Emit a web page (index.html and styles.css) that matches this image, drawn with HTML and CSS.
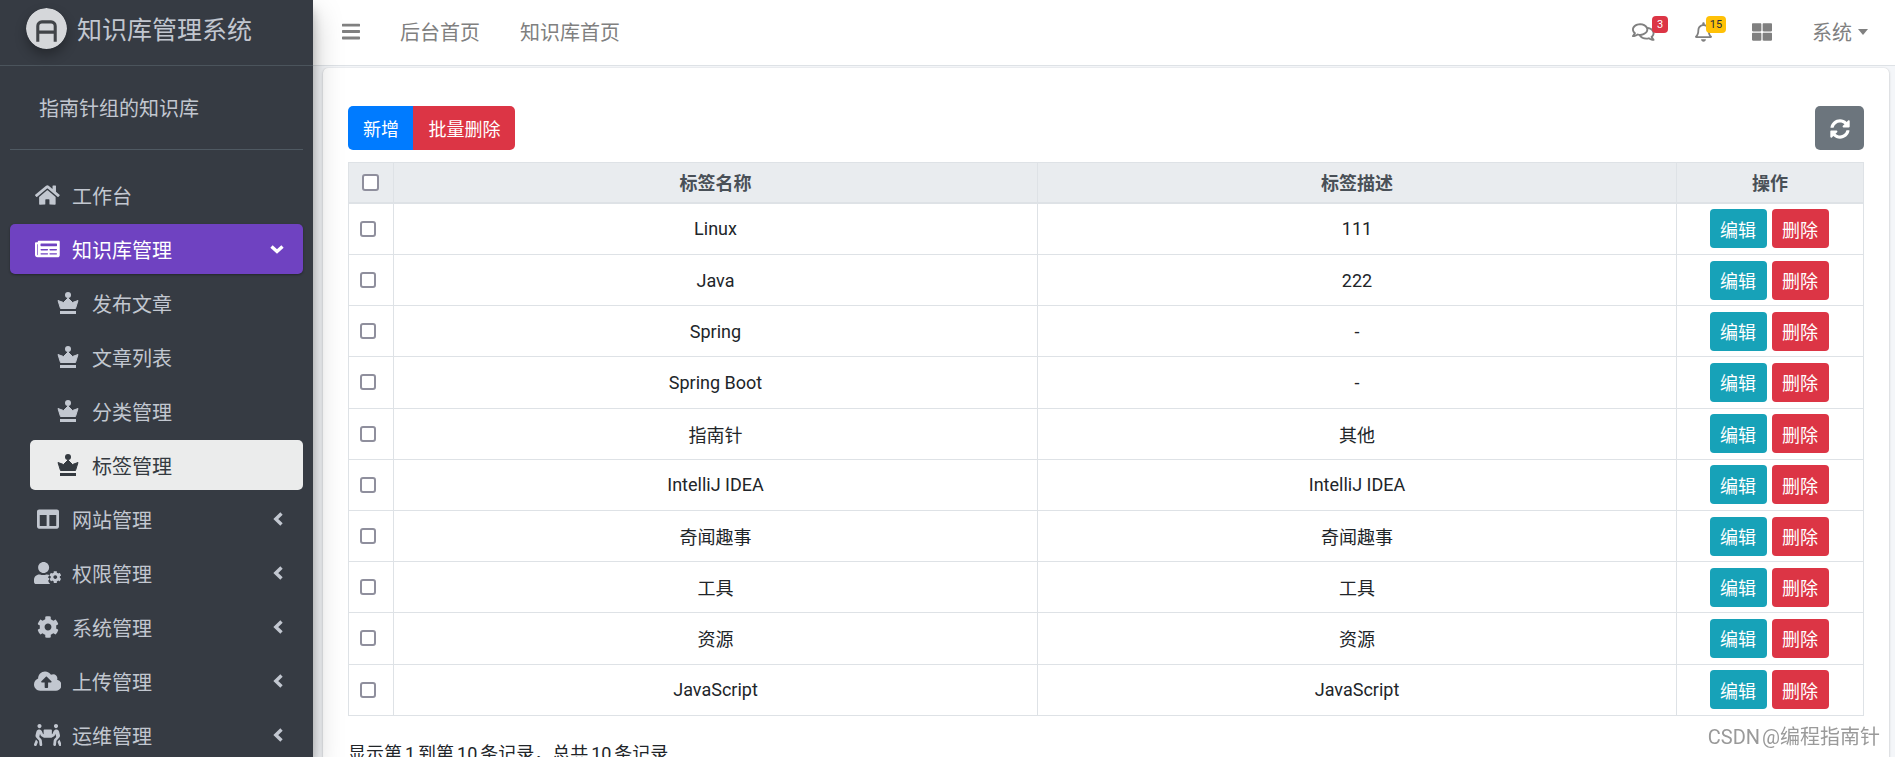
FILE: index.html
```html
<!doctype html>
<html lang="zh">
<head>
    <meta charset="UTF-8">
    <title>知识库管理系统</title>
    <link rel="stylesheet" href="styles.css">
</head>
<body>
    <svg class="icon-defs" xmlns="http://www.w3.org/2000/svg">
        <symbol id="i-crown" viewBox="0 0 22 22">
            <circle cx="11" cy="3" r="3"/>
            <path d="M3.500 16.500L1 8.500l5.500 2L11 6l4.500 4.500 5.500-2-2.500 8z" stroke="currentColor" stroke-linejoin="round"/>
            <rect x="3" y="19" width="16" height="3"/>
        </symbol>
        <symbol id="i-left" viewBox="0 0 10 14"><path d="M8.500 1.500L2.800 7l5.700 5.500" fill="none" stroke="currentColor" stroke-width="3.400"/></symbol>
        <symbol id="i-cog" viewBox="0 0 512 512"><path d="M487.4 315.7l-42.6-24.6c4.3-23.2 4.3-47 0-70.2l42.6-24.6c4.9-2.8 7.1-8.6 5.5-14-11.1-35.6-30-67.8-54.7-94.6-3.8-4.1-10-5.1-14.8-2.3L380.8 110c-17.9-15.4-38.5-27.3-60.8-35.1V25.8c0-5.6-3.9-10.5-9.4-11.7-36.7-8.2-74.3-7.8-109.2 0-5.5 1.2-9.4 6.1-9.4 11.7V75c-22.2 7.9-42.8 19.8-60.8 35.1L88.7 85.5c-4.9-2.8-11-1.9-14.8 2.3-24.7 26.7-43.6 58.9-54.7 94.6-1.7 5.4.6 11.2 5.5 14L67.3 221c-4.3 23.2-4.3 47 0 70.2l-42.6 24.6c-4.9 2.8-7.1 8.6-5.5 14 11.1 35.6 30 67.8 54.7 94.6 3.8 4.1 10 5.1 14.8 2.3l42.6-24.6c17.9 15.4 38.5 27.3 60.8 35.1v49.2c0 5.6 3.9 10.5 9.4 11.7 36.7 8.2 74.3 7.8 109.2 0 5.5-1.2 9.4-6.1 9.4-11.7v-49.2c22.2-7.9 42.8-19.8 60.8-35.1l42.6 24.6c4.9 2.8 11 1.9 14.8-2.3 24.7-26.7 43.6-58.9 54.7-94.6 1.5-5.5-.7-11.3-5.6-14.1zM256 336c-44.1 0-80-35.9-80-80s35.9-80 80-80 80 35.9 80 80-35.9 80-80 80z"/></symbol>
    </svg>

    <aside class="sidebar">
        <div class="brand">
            <svg class="brand-logo" viewBox="0 0 40 40">
                <circle cx="20" cy="20" r="20" fill="#d5d7da"/>
                <path d="M11.500 33V17.500a4 4 0 0 1 4-4h9a4 4 0 0 1 4 4V33M11.500 23.500h17" fill="none" stroke="#414448" stroke-width="3"/>
            </svg>
            <span class="brand-text">知识库管理系统</span>
        </div>
        <div class="user-panel">指南针组的知识库</div>
        <ul class="menu">
            <li class="menu-item">
                <span class="menu-icon"><svg viewBox="0 0 576 512"><path d="M280.37 148.26L96 300.11V464a16 16 0 0 0 16 16l112.06-.29a16 16 0 0 0 15.92-16V368a16 16 0 0 1 16-16h64a16 16 0 0 1 16 16v95.64a16 16 0 0 0 16 16.05L464 480a16 16 0 0 0 16-16V300L295.67 148.26a12.19 12.19 0 0 0-15.3 0zM571.6 251.47L488 182.56V44.05a12 12 0 0 0-12-12h-56a12 12 0 0 0-12 12v72.61L318.47 43a48 48 0 0 0-61 0L4.34 251.47a12 12 0 0 0-1.6 16.9l25.5 31A12 12 0 0 0 45.15 301l235.22-193.74a12.19 12.19 0 0 1 15.3 0L530.9 301a12 12 0 0 0 16.9-1.6l25.5-31a12 12 0 0 0-1.7-16.93z"/></svg></span>
                <span class="menu-label">工作台</span>
            </li>
            <li class="menu-item active">
                <span class="menu-icon"><svg viewBox="0 0 576 512"><path d="M552 64H88c-13.255 0-24 10.745-24 24v8H24c-13.255 0-24 10.745-24 24v272c0 30.928 25.072 56 56 56h472c26.51 0 48-21.49 48-48V88c0-13.255-10.745-24-24-24zM56 400a8 8 0 0 1-8-8V144h16v248a8 8 0 0 1-8 8zm236-16H140c-6.627 0-12-5.373-12-12v-8c0-6.627 5.373-12 12-12h152c6.627 0 12 5.373 12 12v8c0 6.627-5.373 12-12 12zm208 0H348c-6.627 0-12-5.373-12-12v-8c0-6.627 5.373-12 12-12h152c6.627 0 12 5.373 12 12v8c0 6.627-5.373 12-12 12zm-208-96H140c-6.627 0-12-5.373-12-12v-8c0-6.627 5.373-12 12-12h152c6.627 0 12 5.373 12 12v8c0 6.627-5.373 12-12 12zm208 0H348c-6.627 0-12-5.373-12-12v-8c0-6.627 5.373-12 12-12h152c6.627 0 12 5.373 12 12v8c0 6.627-5.373 12-12 12zm0-96H140c-6.627 0-12-5.373-12-12v-40c0-6.627 5.373-12 12-12h360c6.627 0 12 5.373 12 12v40c0 6.627-5.373 12-12 12z"/></svg></span>
                <span class="menu-label">知识库管理</span>
                <svg class="menu-arrow-down" viewBox="0 0 14 9"><path d="M1.500 1.500l5.500 5 5.500-5" fill="none" stroke="currentColor" stroke-width="3.400"/></svg>
            </li>
            <li class="menu-item sub">
                <span class="menu-icon"><svg class="crown"><use href="#i-crown"/></svg></span>
                <span class="menu-label">发布文章</span>
            </li>
            <li class="menu-item sub">
                <span class="menu-icon"><svg class="crown"><use href="#i-crown"/></svg></span>
                <span class="menu-label">文章列表</span>
            </li>
            <li class="menu-item sub">
                <span class="menu-icon"><svg class="crown"><use href="#i-crown"/></svg></span>
                <span class="menu-label">分类管理</span>
            </li>
            <li class="menu-item sub current">
                <span class="menu-icon"><svg class="crown"><use href="#i-crown"/></svg></span>
                <span class="menu-label">标签管理</span>
            </li>
            <li class="menu-item">
                <span class="menu-icon"><svg viewBox="0 0 512 512"><path d="M464 32H48C21.49 32 0 53.49 0 80v352c0 26.51 21.49 48 48 48h416c26.51 0 48-21.49 48-48V80c0-26.51-21.49-48-48-48zM224 416H64V160h160v256zm224 0H288V160h160v256z"/></svg></span>
                <span class="menu-label">网站管理</span>
                <svg class="menu-arrow"><use href="#i-left"/></svg>
            </li>
            <li class="menu-item">
                <span class="menu-icon"><svg viewBox="0 0 640 512"><path d="M224 256c70.700 0 128-57.300 128-128S294.700 0 224 0 96 57.300 96 128s57.300 128 128 128zM404 512H48c-26.500 0-48-21.500-48-48v-52c0-68.500 55.500-124 124-124h16.700c22.300 10.200 46.900 16 73.300 16s51-5.800 73.300-16H304c20 0 39 4.800 55.800 13.200-16 20-26.800 42-32.800 63.800l26 15c-2 12-2 24 0 36l-26 15c8 28 22 52 44 75 6 6 14 8 22 5l11 1z"/><path transform="translate(352 208) scale(.56)" d="M487.4 315.7l-42.600-24.600c4.300-23.200 4.300-47 0-70.200l42.600-24.600c4.900-2.800 7.100-8.600 5.500-14-11.100-35.600-30-67.800-54.700-94.600-3.800-4.100-10-5.100-14.800-2.300L380.800 110c-17.900-15.400-38.500-27.300-60.800-35.100V25.800c0-5.600-3.900-10.500-9.400-11.700-36.700-8.200-74.300-7.800-109.200 0-5.500 1.200-9.400 6.100-9.400 11.700V75c-22.200 7.900-42.800 19.800-60.800 35.100L88.700 85.500c-4.900-2.800-11-1.900-14.800 2.300-24.700 26.700-43.600 58.900-54.700 94.600-1.700 5.400.6 11.200 5.500 14L67.300 221c-4.300 23.200-4.300 47 0 70.200l-42.600 24.600c-4.900 2.800-7.100 8.600-5.500 14 11.100 35.600 30 67.800 54.700 94.600 3.800 4.100 10 5.100 14.800 2.300l42.600-24.600c17.900 15.400 38.500 27.300 60.800 35.100v49.200c0 5.600 3.900 10.500 9.400 11.700 36.700 8.200 74.300 7.800 109.200 0 5.500-1.200 9.400-6.100 9.400-11.700v-49.200c22.200-7.900 42.800-19.800 60.800-35.100l42.600 24.600c4.900 2.800 11 1.900 14.800-2.300 24.700-26.700 43.600-58.900 54.700-94.600 1.500-5.500-.7-11.300-5.600-14.100zM256 336c-44.100 0-80-35.900-80-80s35.900-80 80-80 80 35.900 80 80-35.900 80-80 80z"/></svg></span>
                <span class="menu-label">权限管理</span>
                <svg class="menu-arrow"><use href="#i-left"/></svg>
            </li>
            <li class="menu-item">
                <span class="menu-icon"><svg viewBox="0 0 512 512"><use href="#i-cog"/></svg></span>
                <span class="menu-label">系统管理</span>
                <svg class="menu-arrow"><use href="#i-left"/></svg>
            </li>
            <li class="menu-item">
                <span class="menu-icon"><svg viewBox="0 0 640 512"><path d="M537.6 226.6c4.100-10.700 6.400-22.400 6.400-34.600 0-53-43-96-96-96-19.700 0-38.100 6-53.300 16.200C367 64.200 315.300 32 256 32c-88.400 0-160 71.600-160 160 0 2.700.1 5.400.2 8.100C40.200 219.800 0 273.200 0 336c0 79.500 64.500 144 144 144h368c70.700 0 128-57.300 128-128 0-61.900-44-113.600-102.400-125.400zM393.400 288H328v112c0 8.800-7.200 16-16 16h-48c-8.800 0-16-7.200-16-16V288h-65.400c-14.300 0-21.400-17.200-11.300-27.300l105.400-105.400c6.200-6.200 16.400-6.200 22.600 0l105.400 105.400c10.100 10.100 2.900 27.300-11.300 27.300z"/></svg></span>
                <span class="menu-label">上传管理</span>
                <svg class="menu-arrow"><use href="#i-left"/></svg>
            </li>
            <li class="menu-item">
                <span class="menu-icon"><svg viewBox="0 0 640 512"><path d="M128 96c26.500 0 48-21.500 48-48S154.500 0 128 0 80 21.500 80 48s21.500 48 48 48zm384 0c26.500 0 48-21.500 48-48S538.500 0 512 0s-48 21.500-48 48 21.500 48 48 48zm125.700 372.100l-44-110-41.100 46.400-2 18.200 27.700 69.200c5 12.500 17 20.100 29.700 20.100 4 0 8-.7 11.900-2.300 16.400-6.600 24.400-25.200 17.800-41.600zm-34.200-209.800L585 178.100c-4.600-20-18.600-36.800-37.500-44.900-18.500-8-39-6.700-56.100 3.300-22.700 13.400-39.700 34.500-48.100 59.400L432 229.800 416 240v-96c0-8.800-7.200-16-16-16H240c-8.800 0-16 7.200-16 16v96l-16.100-10.200-11.300-33.900c-8.300-25-25.400-46-48.100-59.400-17.200-10-37.600-11.300-56.100-3.300-18.900 8.100-32.900 24.900-37.500 44.900l-18.400 80.200c-4.600 20 .7 41.200 14.400 56.700l67.200 75.900 10.100 92.600C130 499.800 143.800 512 160 512c1.200 0 2.300-.1 3.500-.2 17.600-1.900 30.200-17.700 28.300-35.300l-10.100-92.800c-1.500-13-6.900-25.100-15.600-35l-43.300-49 17.600-70.300 6.800 20.400c4.100 12.500 11.900 23.400 24.500 32.600l51.100 32.500c4.600 2.900 12.100 4.600 17.200 5h160c5.100-.4 12.600-2.100 17.200-5l51.100-32.500c12.600-9.200 20.400-20 24.500-32.600l6.800-20.400 17.600 70.300-43.300 49c-8.700 9.900-14.100 22-15.600 35l-10.100 92.800c-1.900 17.600 10.800 33.400 28.300 35.300 1.200.1 2.300.2 3.500.2 16.100 0 29.900-12.200 31.700-28.500l10.100-92.600 67.200-75.900c13.600-15.500 19-36.700 14.400-56.700zM46.300 358.100l-44 110c-6.600 16.400 1.400 35 17.800 41.600 16.800 6.600 35.100-1.700 41.600-17.800l27.700-69.200-2-18.200-41.100-46.400z"/></svg></span>
                <span class="menu-label">运维管理</span>
                <svg class="menu-arrow"><use href="#i-left"/></svg>
            </li>
        </ul>
    </aside>

    <div class="main">
        <nav class="topbar">
            <svg class="bars" viewBox="0 0 448 512"><path d="M16 132h416c8.837 0 16-7.163 16-16V76c0-8.837-7.163-16-16-16H16C7.163 60 0 67.163 0 76v40c0 8.837 7.163 16 16 16zm0 160h416c8.837 0 16-7.163 16-16v-40c0-8.837-7.163-16-16-16H16c-8.837 0-16 7.163-16 16v40c0 8.837 7.163 16 16 16zm0 160h416c8.837 0 16-7.163 16-16v-40c0-8.837-7.163-16-16-16H16c-8.837 0-16 7.163-16 16v40c0 8.837 7.163 16 16 16z"/></svg>
            <a class="top-link">后台首页</a>
            <a class="top-link">知识库首页</a>
            <div class="top-right">
                <span class="top-icon comments">
                    <svg viewBox="0 0 576 512"><path d="M532 386.200c27.500-27.100 44-61.100 44-98.200 0-80-76.500-146.100-176.200-157.900C368.300 72.500 294.300 32 208 32 93.100 32 0 103.600 0 192c0 37 16.500 71 44 98.200-15.300 30.700-37.300 54.500-37.700 54.900-6.300 6.700-8.100 16.500-4.400 25 3.600 8.500 12 14 21.200 14 53.500 0 96.700-20.200 125.200-38.800 9.200 2.100 18.700 3.700 28.400 4.900C208.100 407.600 281.800 448 368 448c20.800 0 40.800-2.400 59.800-6.800C456.300 459.700 499.400 480 553 480c9.200 0 17.500-5.500 21.200-14 3.600-8.500 1.900-18.300-4.400-25-.4-.3-22.500-24.100-37.800-54.800zm-392.800-92.300L122.100 305c-14.100 9.100-28.500 16.300-43.100 21.400 2.700-4.700 5.400-9.700 8-14.800l15.500-31.100L77.700 256C64.200 242.600 48 220.700 48 192c0-60.700 73.300-112 160-112s160 51.300 160 112-73.300 112-160 112c-16.500 0-33-1.900-49-5.600l-19.800-4.500zM498.300 352l-24.700 24.400 15.500 31.100c2.600 5.100 5.300 10.100 8 14.800-14.600-5.100-29-12.300-43.100-21.400l-17.100-11.100-19.900 4.600c-16 3.700-32.500 5.600-49 5.600-54 0-102.200-20.100-131.300-49.700C338 339.500 416 272.900 416 192c0-3.400-.4-6.700-.7-10C479.700 196.500 528 238.800 528 288c0 28.700-16.200 50.600-29.700 64z"/></svg>
                    <span class="badge badge-red">3</span>
                </span>
                <span class="top-icon bell">
                    <svg viewBox="0 0 448 512"><path d="M439.390 362.290c-19.320-20.760-55.470-51.990-55.470-154.290 0-77.700-54.480-139.900-127.940-155.160V32c0-17.670-14.320-32-31.980-32s-31.980 14.330-31.980 32v20.840C118.560 68.100 64.080 130.300 64.080 208c0 102.300-36.150 133.530-55.470 154.290-6 6.450-8.660 14.160-8.610 21.710.11 16.400 12.980 32 32.100 32h383.800c19.120 0 32-15.600 32.100-32 .05-7.550-2.610-15.270-8.610-21.710zM67.530 368c21.220-27.970 44.420-74.330 44.530-159.420 0-.2-.06-.38-.06-.58 0-61.860 50.140-112 112-112s112 50.140 112 112c0 .2-.06.38-.06.58.11 85.100 23.310 131.460 44.530 159.420H67.530zM224 512c35.320 0 63.970-28.650 63.970-64H160.030c0 35.350 28.650 64 63.970 64z"/></svg>
                    <span class="badge badge-yellow">15</span>
                </span>
                <svg class="top-grid" viewBox="0 0 512 512"><path d="M296 32h192c13.255 0 24 10.745 24 24v160c0 13.255-10.745 24-24 24H296c-13.255 0-24-10.745-24-24V56c0-13.255 10.745-24 24-24zm-80 0H24C10.745 32 0 42.745 0 56v160c0 13.255 10.745 24 24 24h192c13.255 0 24-10.745 24-24V56c0-13.255-10.745-24-24-24zM0 296v160c0 13.255 10.745 24 24 24h192c13.255 0 24-10.745 24-24V296c0-13.255-10.745-24-24-24H24c-13.255 0-24 10.745-24 24zm296 184h192c13.255 0 24-10.745 24-24V296c0-13.255-10.745-24-24-24H296c-13.255 0-24 10.745-24 24v160c0 13.255 10.745 24 24 24z"/></svg>
                <a class="top-link top-user">系统<span class="caret"></span></a>
            </div>
        </nav>

        <main class="content">
            <section class="card">
                <div class="toolbar">
                    <div class="btn-group">
                        <button class="btn btn-blue">新增</button>
                        <button class="btn btn-red">批量删除</button>
                    </div>
                    <button class="btn btn-gray">
                        <svg viewBox="0 0 512 512"><path d="M370.720 133.280C339.458 104.008 298.888 87.962 255.848 88c-77.458.068-144.328 53.178-162.791 126.850-1.344 5.363-6.122 9.150-11.651 9.150H24.103c-7.498 0-13.194-6.807-11.807-14.176C33.933 94.924 134.813 8 256 8c66.448 0 126.791 26.136 171.315 68.685L463.030 40.970C478.149 25.851 504 36.559 504 57.941V192c0 13.255-10.745 24-24 24H345.941c-21.382 0-32.090-25.851-16.971-40.971l41.750-41.749zM32 296h134.059c21.382 0 32.090 25.851 16.971 40.971l-41.750 41.750c31.262 29.273 71.835 45.319 114.876 45.280 77.418-.07 144.315-53.144 162.787-126.849 1.344-5.363 6.122-9.150 11.651-9.150h57.304c7.498 0 13.194 6.807 11.807 14.176C478.067 417.076 377.187 504 256 504c-66.448 0-126.791-26.136-171.315-68.685L48.970 471.030C33.851 486.149 8 475.441 8 454.059V320c0-13.255 10.745-24 24-24z"/></svg>
                    </button>
                </div>

                <table class="tag-table">
                    <colgroup>
                        <col class="col-check">
                        <col class="col-name">
                        <col class="col-desc">
                        <col>
                    </colgroup>
                    <thead>
                        <tr>
                            <th><input type="checkbox" class="check"></th>
                            <th>标签名称</th>
                            <th>标签描述</th>
                            <th>操作</th>
                        </tr>
                    </thead>
                    <tbody>
                        <tr><td><input type="checkbox" class="check check-row"></td><td>Linux</td><td>111</td><td><button class="btn btn-small btn-teal">编辑</button><button class="btn btn-small btn-red">删除</button></td></tr>
                        <tr><td><input type="checkbox" class="check check-row"></td><td>Java</td><td>222</td><td><button class="btn btn-small btn-teal">编辑</button><button class="btn btn-small btn-red">删除</button></td></tr>
                        <tr><td><input type="checkbox" class="check check-row"></td><td>Spring</td><td>-</td><td><button class="btn btn-small btn-teal">编辑</button><button class="btn btn-small btn-red">删除</button></td></tr>
                        <tr><td><input type="checkbox" class="check check-row"></td><td>Spring Boot</td><td>-</td><td><button class="btn btn-small btn-teal">编辑</button><button class="btn btn-small btn-red">删除</button></td></tr>
                        <tr><td><input type="checkbox" class="check check-row"></td><td>指南针</td><td>其他</td><td><button class="btn btn-small btn-teal">编辑</button><button class="btn btn-small btn-red">删除</button></td></tr>
                        <tr><td><input type="checkbox" class="check check-row"></td><td>IntelliJ IDEA</td><td>IntelliJ IDEA</td><td><button class="btn btn-small btn-teal">编辑</button><button class="btn btn-small btn-red">删除</button></td></tr>
                        <tr><td><input type="checkbox" class="check check-row"></td><td>奇闻趣事</td><td>奇闻趣事</td><td><button class="btn btn-small btn-teal">编辑</button><button class="btn btn-small btn-red">删除</button></td></tr>
                        <tr><td><input type="checkbox" class="check check-row"></td><td>工具</td><td>工具</td><td><button class="btn btn-small btn-teal">编辑</button><button class="btn btn-small btn-red">删除</button></td></tr>
                        <tr><td><input type="checkbox" class="check check-row"></td><td>资源</td><td>资源</td><td><button class="btn btn-small btn-teal">编辑</button><button class="btn btn-small btn-red">删除</button></td></tr>
                        <tr><td><input type="checkbox" class="check check-row"></td><td>JavaScript</td><td>JavaScript</td><td><button class="btn btn-small btn-teal">编辑</button><button class="btn btn-small btn-red">删除</button></td></tr>
                    </tbody>
                </table>

                <p class="table-info">显示第 1 到第 10 条记录，总共 10 条记录</p>
            </section>
        </main>
    </div>

    <div class="watermark">CSDN @编程指南针</div>
</body>
</html>
```

FILE: styles.css
```css
* {
    box-sizing: border-box;
}

html, body {
    height: 100%;
}

body {
    display: flex;
    margin: 0;
    overflow: hidden;
    background-color: #f4f6f9;
    color: #212529;
    font-family: Roboto, "Noto Sans CJK SC", sans-serif;
    font-size: 18px;
}

ul {
    list-style: none;
    margin: 0;
    padding: 0;
}

.icon-defs {
    position: absolute;
    width: 0;
    height: 0;
}

/* Sidebar */
.sidebar {
    position: relative;
    z-index: 2;
    flex: 0 0 313px;
    background-color: #363b43;
    color: #c2c7d0;
    font-size: 20px;
    box-shadow: 0 14px 28px rgba(0, 0, 0, .25), 0 10px 10px rgba(0, 0, 0, .22);
}

.brand {
    display: flex;
    align-items: center;
    height: 66px;
    padding: 0 0 17px 26px;
    border-bottom: 1px solid #4b545c;
}

.brand-logo {
    width: 41px;
    height: 41px;
    margin-top: 8px;
    border-radius: 50%;
    box-shadow: 0 6px 12px rgba(0, 0, 0, .3);
}

.brand-text {
    margin: 12px 0 0 10px;
    font-size: 25px;
    line-height: 1;
}

.user-panel {
    height: 84px;
    margin: 0 10px 20px;
    padding: 28px 0 0 29px;
    border-bottom: 1px solid #4f5962;
    line-height: 30px;
}

.menu {
    padding: 0 10px;
}

.menu-item {
    display: flex;
    align-items: center;
    height: 50px;
    margin-bottom: 4px;
    padding-left: 20px;
    border-radius: 5px;
}

.menu-item.sub {
    margin-left: 20px;
}

.menu-icon {
    display: flex;
    justify-content: center;
    flex: 0 0 35px;
    margin-right: 7px;
}

.menu-icon svg {
    height: 22px;
    fill: currentColor;
}

.menu-icon .crown {
    width: 22px;
}

.menu-label {
    flex: 1;
}

.menu-arrow {
    width: 10px;
    height: 14px;
    margin-right: 20px;
}

.menu-arrow-down {
    width: 14px;
    height: 9px;
    margin-right: 19px;
}

.menu-item.active {
    background-color: #6f42c1;
    color: #fff;
    box-shadow: 0 1px 3px rgba(0, 0, 0, .12), 0 1px 2px rgba(0, 0, 0, .24);
}

.menu-item.current {
    background-color: #ebecec;
    color: #343a40;
}

/* Top bar */
.main {
    flex: 1;
    min-width: 0;
}

.topbar {
    display: flex;
    align-items: center;
    height: 66px;
    padding: 0 0 2px 29px;
    background-color: #fff;
    border-bottom: 1px solid #dee2e6;
    font-size: 20px;
}

.bars {
    width: 18px;
    height: 21px;
    margin-right: 40px;
    fill: #808080;
}

.top-link {
    margin-right: 40px;
    color: #808080;
}

.top-right {
    display: flex;
    align-items: center;
    margin-left: auto;
}

.top-icon {
    position: relative;
    display: flex;
}

.top-icon svg {
    height: 20px;
    fill: #808080;
}

.comments {
    width: 23px;
    margin-right: 40px;
}

.bell {
    width: 17px;
    margin-right: 40px;
}

.badge {
    position: absolute;
    top: -6px;
    height: 17px;
    border-radius: 4px;
    font-size: 11px;
    line-height: 17px;
    text-align: center;
}

.badge-red {
    left: 20px;
    width: 16px;
    background-color: #dc3545;
    color: #fff;
}

.badge-yellow {
    left: 11px;
    width: 20px;
    background-color: #ffc107;
    color: #1f2d3d;
}

.top-grid {
    width: 20px;
    height: 20px;
    margin-right: 40px;
    fill: #808080;
}

.top-user {
    display: flex;
    align-items: center;
    margin-right: 27px;
}

.caret {
    width: 0;
    height: 0;
    margin-left: 6px;
    border-top: 6px solid #808080;
    border-left: 5.5px solid transparent;
    border-right: 5.5px solid transparent;
}

/* Content */
.content {
    padding: 2px 6px 0 10px;
}

.card {
    padding: 38px 25px 0 25px;
    background-color: #fff;
    border-radius: 5px;
    box-shadow: 0 0 1px rgba(0, 0, 0, .125), 0 1px 3px rgba(0, 0, 0, .2);
}

.toolbar {
    display: flex;
    justify-content: space-between;
    margin-bottom: 12px;
}

.btn-group {
    display: flex;
}

.btn {
    height: 44px;
    padding: 0 15px;
    border: none;
    color: #fff;
    font-family: inherit;
    font-size: 18px;
}

.btn-group .btn:first-child {
    padding: 0 14px 0 15px;
    border-radius: 5px 0 0 5px;
}

.btn-group .btn:last-child {
    padding: 0 14.5px 0 15.5px;
    border-radius: 0 5px 5px 0;
}

.btn-blue {
    background-color: #007bff;
}

.btn-red {
    background-color: #dc3545;
}

.btn-teal {
    background-color: #17a2b8;
}

.btn-gray {
    width: 49px;
    padding: 0;
    background-color: #6c757d;
    border-radius: 5px;
}

.btn-gray svg {
    width: 20px;
    height: 20px;
    vertical-align: middle;
    fill: #fff;
}

.btn-small {
    width: 57px;
    height: 39px;
    padding: 0;
    border-radius: 4px;
    vertical-align: middle;
}

.btn-small + .btn-small {
    margin-left: 5px;
}

/* Table */
.tag-table {
    width: 100%;
    border-collapse: collapse;
    table-layout: fixed;
}

.col-check {
    width: 45px;
}

.col-name {
    width: 644px;
}

.col-desc {
    width: 639px;
}

.tag-table th,
.tag-table td {
    padding: 0;
    border: 1px solid #dee2e6;
    text-align: center;
}

.tag-table th {
    height: 40px;
    background-color: #e9ecef;
    border-bottom-width: 2px;
    color: #495057;
    font-weight: bold;
}

.tag-table td {
    height: 51.2px;
}

.tag-table td:last-child {
    padding-right: 2px;
}

.tag-table tbody tr:first-child td {
    height: 52px;
}

.check {
    appearance: none;
    display: block;
    width: 17px;
    height: 17px;
    margin: 0 0 0 13px;
    background-color: #fff;
    border: 2px solid #8f8f9d;
    border-radius: 3px;
}

.check-row {
    width: 16px;
    height: 16px;
    margin-left: 11px;
}

.table-info {
    margin: 24px 0 0;
    line-height: 27px;
    word-spacing: -1.5px;
}

.watermark {
    position: fixed;
    right: 15px;
    bottom: 7px;
    z-index: 3;
    color: #9a9a9a;
    font-size: 20px;
    word-spacing: -3px;
}
```
